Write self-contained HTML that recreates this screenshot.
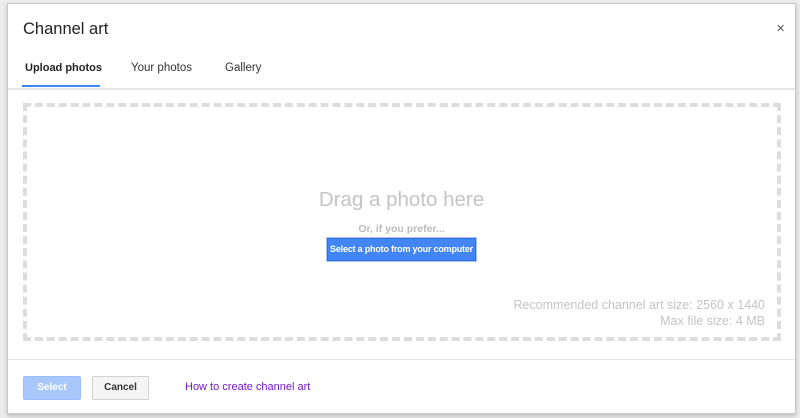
<!DOCTYPE html>
<html><head><style>
body{margin:0;width:800px;height:418px;background:#ececec;position:relative;overflow:hidden;font-family:"Liberation Sans",Arial,sans-serif}
.dlg{position:absolute;left:7px;top:3px;width:787px;height:409px;background:#fff;border:1px solid #c8c8c8;box-shadow:0 2px 4px rgba(0,0,0,.2)}
.t{position:absolute;left:15px;top:16px;font-size:16.5px;color:#222}
.x{position:absolute;left:768px;top:18px;font-size:11px;color:#555}
.tab{position:absolute;top:58px;font-size:11.5px;color:#333;white-space:nowrap}
.ul{position:absolute;left:14px;top:81px;width:78px;height:2px;background:#4285f4}
.hl{position:absolute;left:0;top:84px;width:787px;height:2px;background:#e5e5e5}
.dash{position:absolute;left:15px;top:99px;width:750px;height:230px;border:4px dashed #ddd}
.drag{position:absolute;left:0;width:100%;text-align:center;top:184px;font-size:20.5px;color:#c4c4c4}
.or{position:absolute;left:0;width:100%;text-align:center;top:219px;font-size:10.5px;color:#bbb;font-weight:bold}
.btn{position:absolute;left:319px;top:234px;width:147px;height:21px;background:#4285f4;border:1px solid #2d6ee0;color:#fff;font-size:9px;font-weight:bold;text-align:center;line-height:21px;white-space:nowrap;letter-spacing:-0.2px;box-shadow:0 0 0 1px #a9c4f5}
.rec{position:absolute;right:30px;top:293px;text-align:right;font-size:12.5px;color:#c4c4c4;line-height:16px}
.fl{position:absolute;left:0;top:355px;width:787px;height:1px;background:#e5e5e5}
.sel{position:absolute;left:15px;top:372px;width:56px;height:22px;background:#a8c7fa;border:1px solid #9bbdf5;border-radius:2px;color:#fff;font-size:10px;font-weight:bold;text-align:center;line-height:22px}
.can{position:absolute;left:84px;top:372px;width:55px;height:22px;background:#f5f5f5;border:1px solid #d3d3d3;border-radius:2px;color:#333;font-size:10px;font-weight:bold;text-align:center;line-height:22px}
.how{position:absolute;left:177px;top:377px;font-size:11px;color:#7418ce}
</style></head><body>
<div class="dlg">
<div class="t">Channel art</div>
<div class="x">✕</div>
<div class="tab" style="left:17px;font-weight:bold;color:#222;font-size:11px">Upload photos</div>
<div class="tab" style="left:123px">Your photos</div>
<div class="tab" style="left:217px">Gallery</div>
<div class="ul"></div>
<div class="hl"></div>
<div class="dash"></div>
<div class="drag">Drag a photo here</div>
<div class="or">Or, if you prefer...</div>
<div class="btn">Select a photo from your computer</div>
<div class="rec">Recommended channel art size: 2560 x 1440<br>Max file size: 4 MB</div>
<div class="fl"></div>
<div class="sel">Select</div>
<div class="can">Cancel</div>
<div class="how">How to create channel art</div>
</div>
</body></html>
